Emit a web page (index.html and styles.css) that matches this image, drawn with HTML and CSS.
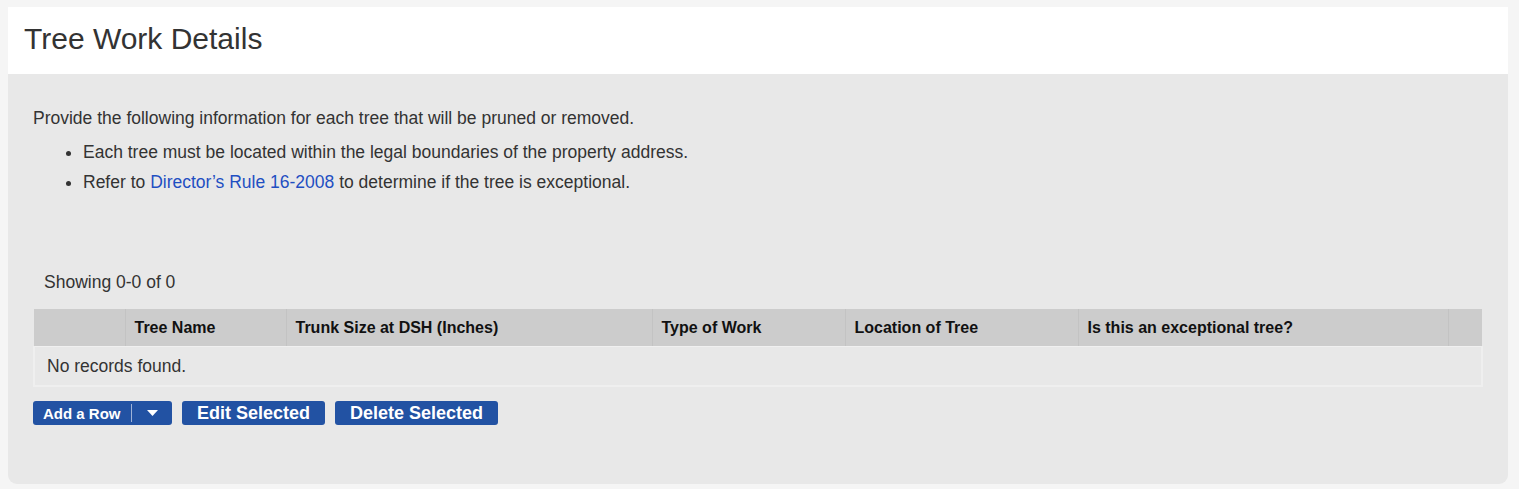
FILE: index.html
```html
<!DOCTYPE html>
<html>
<head>
<meta charset="utf-8">
<link rel="stylesheet" href="styles.css">
</head>
<body>
<div class="card">
  <div class="card-head"><h1 class="title">Tree Work Details</h1></div>
  <div class="card-body">
    <p class="intro">Provide the following information for each tree that will be pruned or removed.</p>
    <ul class="bullets">
      <li>Each tree must be located within the legal boundaries of the property address.</li>
      <li>Refer to <a class="link" href="#">Director’s Rule 16-2008</a> to determine if the tree is exceptional.</li>
    </ul>
    <div class="showing">Showing 0-0 of 0</div>
    <table class="grid">
      <colgroup>
        <col style="width:91px"><col style="width:161px"><col style="width:366px"><col style="width:193px"><col style="width:233px"><col style="width:370px"><col style="width:34px">
      </colgroup>
      <thead>
        <tr>
          <th></th><th>Tree Name</th><th>Trunk Size at DSH (Inches)</th><th>Type of Work</th><th>Location of Tree</th><th>Is this an exceptional tree?</th><th></th>
        </tr>
      </thead>
      <tbody>
        <tr><td class="empty" colspan="7">No records found.</td></tr>
      </tbody>
    </table>
    <div class="actions">
      <div class="btn btn-split">
        <span class="btn-main">Add a Row</span>
        <span class="btn-sep"></span>
        <span class="btn-caret"><svg width="11" height="6" viewBox="0 0 11 6"><path d="M0 0h11L5.5 6z" fill="#fff"/></svg></span>
      </div>
      <div class="btn btn-lg">Edit Selected</div>
      <div class="btn btn-lg">Delete Selected</div>
    </div>
  </div>
</div>
</body>
</html>
```
FILE: styles.css
```css
html, body { margin: 0; padding: 0; }
body {
  background: #f5f5f5;
  font-family: "Liberation Sans", Arial, sans-serif;
  color: #333;
  padding: 7px 11px 6px 8px;
}
.card {
  display: flex;
  flex-direction: column;
  border-radius: 0 0 9px 9px;
  overflow: hidden;
}
.card-head {
  background: #fff;
  height: 67px;
  display: flex;
  align-items: center;
  padding: 0 0 3px 16px;
  box-sizing: border-box;
}
.title {
  margin: 0;
  font-weight: normal;
  font-size: 30px;
  color: #333;
  line-height: 1;
}
.card-body {
  background: #e8e8e8;
  padding: 34px 26px 59px 25px;
}
.intro {
  margin: 0;
  font-size: 17.5px;
  line-height: 20px;
}
.bullets {
  margin: 14px 0 0 0;
  padding-left: 50px;
  font-size: 17.5px;
  line-height: 20px;
}
.bullets li { margin-bottom: 10px; }
.link { color: #1f4fc2; text-decoration: none; }
.showing {
  margin-top: 80px;
  padding-left: 11px;
  font-size: 17.5px;
  line-height: 20px;
}
.grid {
  margin-top: 17px;
  width: 1448px;
  border-collapse: collapse;
  table-layout: fixed;
}
.grid th {
  background: #cccccc;
  height: 37px;
  padding: 0 9px;
  text-align: left;
  font-size: 16px;
  font-weight: bold;
  color: #111;
  border-left: 1px solid #c3c3c3;
  border-bottom: 1px solid #f0f0f0;
}
.grid th:first-child { border-left: none; }
.empty {
  height: 38px;
  padding: 0 12px;
  font-size: 17.5px;
  color: #333;
  border: 2px solid #efefef;
  border-top: none;
  background: #e8e8e8;
}
.actions {
  display: flex;
  gap: 10px;
  margin-top: 14px;
}
.btn {
  background: #2252a3;
  color: #fff;
  height: 24px;
  border-radius: 3px;
  display: flex;
  align-items: center;
  font-weight: bold;
}
.btn-split { width: 139px; font-size: 15px; }
.btn-main { padding-left: 10px; width: 88px; }
.btn-sep { width: 1px; height: 18px; background: #9fb3d8; }
.btn-caret { flex: 1; display: flex; justify-content: center; align-items: center; }
.btn-lg { font-size: 18px; padding: 0 15px; }
```
